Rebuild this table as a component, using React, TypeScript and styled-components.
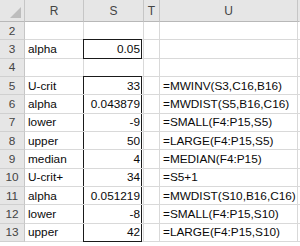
import React from 'react'
import styled, { createGlobalStyle } from 'styled-components'

const GlobalStyle = createGlobalStyle`
  html, body {
    margin: 0;
    padding: 0;
    background: #ffffff;
  }
  body {
    font-family: 'Liberation Sans', Arial, sans-serif;
  }
`

const gridLine = '#d9d9d9'
const boxLine = '#1a1a1a'

interface IRow {
  num: number
  label?: string
  value?: string
  formula?: string
}

const columns = ['R', 'S', 'T', 'U']

const rows: IRow[] = [
  { num: 2 },
  { num: 3, label: 'alpha', value: '0.05' },
  { num: 4 },
  { num: 5, label: 'U-crit', value: '33', formula: '=MWINV(S3,C16,B16)' },
  { num: 6, label: 'alpha', value: '0.043879', formula: '=MWDIST(S5,B16,C16)' },
  { num: 7, label: 'lower', value: '-9', formula: '=SMALL(F4:P15,S5)' },
  { num: 8, label: 'upper', value: '50', formula: '=LARGE(F4:P15,S5)' },
  { num: 9, label: 'median', value: '4', formula: '=MEDIAN(F4:P15)' },
  { num: 10, label: 'U-crit+', value: '34', formula: '=S5+1' },
  { num: 11, label: 'alpha', value: '0.051219', formula: '=MWDIST(S10,B16,C16)' },
  { num: 12, label: 'lower', value: '-8', formula: '=SMALL(F4:P15,S10)' },
  { num: 13, label: 'upper', value: '42', formula: '=LARGE(F4:P15,S10)' },
]

const BOX_FIRST = 5
const BOX_LAST = 13

export default function App() {
  return (
    <>
      <GlobalStyle />
      <Sheet>
        <Corner>
          <CornerMark />
        </Corner>
        {columns.map((col) => (
          <ColHeader key={col}>{col}</ColHeader>
        ))}
        <ColHeader $last />
        {rows.map((row) => {
          const inBox = row.num >= BOX_FIRST && row.num <= BOX_LAST
          const single = row.num === 3
          return (
            <React.Fragment key={row.num}>
              <RowHeader>{row.num}</RowHeader>
              <Cell>{row.label}</Cell>
              <ValueCell
                $boxed={inBox || single}
                $top={single || row.num === BOX_FIRST}
                $bottom={single || row.num === BOX_LAST}
              >
                {row.value}
              </ValueCell>
              <Cell />
              <Cell>{row.formula}</Cell>
              <Cell />
            </React.Fragment>
          )
        })}
      </Sheet>
    </>
  )
}

const Sheet = styled.div`
  display: grid;
  grid-template-columns: 25px 59px 60px 16px 138px 2px;
  grid-template-rows: 22px repeat(12, 18.35px);
  width: 300px;
  height: 246px;
  overflow: hidden;
  font-size: 11.8px;
  color: #0a0a0a;
`

const Corner = styled.div`
  position: relative;
  background: #e6e6e6;
  border-right: 1px solid #c6c6c6;
  border-bottom: 1px solid #b8b8b8;
  box-sizing: border-box;
`

const CornerMark = styled.div`
  position: absolute;
  right: 3px;
  bottom: 3px;
  width: 0;
  height: 0;
  border-left: 11px solid transparent;
  border-bottom: 11px solid #bdbdbd;
`

const ColHeader = styled.div<{ $last?: boolean }>`
  display: flex;
  align-items: center;
  justify-content: center;
  background: #e6e6e6;
  color: #444;
  font-size: 12px;
  border-right: 1px solid ${(p) => (p.$last ? '#e6e6e6' : '#c6c6c6')};
  border-bottom: 1px solid #b8b8b8;
  box-sizing: border-box;
  padding-top: 1px;
`

const RowHeader = styled.div`
  display: flex;
  align-items: center;
  justify-content: center;
  background: #e6e6e6;
  color: #444;
  font-size: 11.8px;
  border-right: 1px solid #c6c6c6;
  border-bottom: 1px solid #d0d0d0;
  box-sizing: border-box;
`

const Cell = styled.div`
  display: flex;
  align-items: center;
  padding: 0 3px;
  white-space: nowrap;
  overflow: visible;
  border-right: 1px solid ${gridLine};
  border-bottom: 1px solid ${gridLine};
  box-sizing: border-box;
`

const ValueCell = styled(Cell)<{ $boxed: boolean; $top: boolean; $bottom: boolean }>`
  justify-content: flex-end;
  position: relative;
  &::after {
    content: '';
    display: ${(p) => (p.$boxed ? 'block' : 'none')};
    position: absolute;
    left: -1px;
    right: 1px;
    top: ${(p) => (p.$top ? '-1px' : '0')};
    bottom: ${(p) => (p.$bottom ? '-1px' : '0')};
    border-left: 1.5px solid ${boxLine};
    border-right: 1.5px solid ${boxLine};
    border-top: ${(p) => (p.$top ? `1.5px solid ${boxLine}` : 'none')};
    border-bottom: ${(p) => (p.$bottom ? `1.5px solid ${boxLine}` : 'none')};
    pointer-events: none;
  }
`
